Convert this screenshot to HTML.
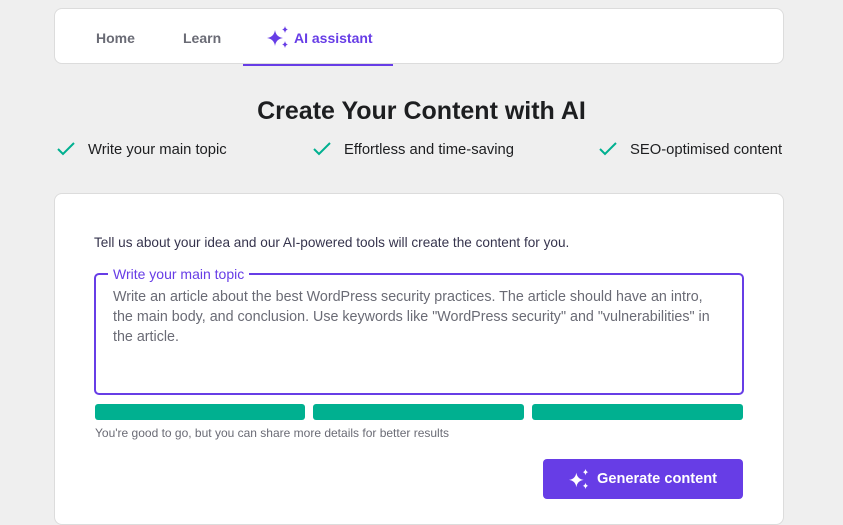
<!DOCTYPE html>
<html><head><style>
body{margin:0;width:843px;height:511px;background:#efefef;font-family:"Liberation Sans",sans-serif;position:relative;overflow:hidden;color:#1d1e20}
.nav{position:absolute;left:54px;top:8px;width:728px;height:54px;background:#fff;border:1px solid #dcdcdc;border-radius:8px}
.nav span{position:absolute;top:21px;font-size:14px;font-weight:bold;color:#6a6b75}
.ul{position:absolute;left:243px;top:64px;width:150px;height:2px;background:#673de6}
h1{position:absolute;left:0;width:843px;top:97px;margin:0;text-align:center;font-size:25px;font-weight:bold}
.feat{position:absolute;top:142px;font-size:14.8px}
.feat svg{position:absolute;left:-32px;top:-1px}
.card{position:absolute;left:54px;top:193px;width:728px;height:330px;background:#fff;border:1px solid #dcdcdc;border-radius:8px}
.lbl{position:absolute;left:108px;top:266px;background:#fff;padding:0 5px;font-size:14px;color:#673de6}
.ta{position:absolute;left:94px;top:273px;width:646px;height:118px;border:2px solid #673de6;border-radius:5px}
.txt{position:absolute;left:113px;top:287px;width:612px;font-size:14.3px;line-height:20px;color:#6a6b75}
.bar{position:absolute;top:404px;height:16px;background:#00b090;border-radius:3px}
.btn{position:absolute;left:543px;top:459px;width:200px;height:40px;background:#673de6;border-radius:4px;color:#fff;font-weight:bold;font-size:14.6px}
</style></head><body>
<div class="nav">
<span style="left:41px">Home</span><span style="left:128px">Learn</span>
<svg style="position:absolute;left:212px;top:16px" width="24" height="24" viewBox="0 0 24 22"><path d="M8 4 Q9 11 16 12 Q9 13 8 20 Q7 13 0 12 Q7 11 8 4Z" fill="#673de6"/><path d="M18 0 Q18.5 3 21 3.5 Q18.5 4 18 7 Q17.5 4 15 3.5 Q17.5 3 18 0Z" fill="#673de6"/><path d="M18 15 Q18.5 18 21 18.5 Q18.5 19 18 22 Q17.5 19 15 18.5 Q17.5 18 18 15Z" fill="#673de6"/></svg>
<span style="left:239px;color:#673de6">AI assistant</span>
</div>
<div class="ul"></div>
<h1>Create Your Content with AI</h1>
<div class="feat" style="left:88px"><svg width="20" height="16"><path d="M2 8 L7 13 L18 2" stroke="#00b090" stroke-width="2" fill="none"/></svg>Write your main topic</div>
<div class="feat" style="left:344px"><svg width="20" height="16"><path d="M2 8 L7 13 L18 2" stroke="#00b090" stroke-width="2" fill="none"/></svg>Effortless and time-saving</div>
<div class="feat" style="left:630px"><svg width="20" height="16"><path d="M2 8 L7 13 L18 2" stroke="#00b090" stroke-width="2" fill="none"/></svg>SEO-optimised content</div>
<div class="card"></div>
<div style="position:absolute;left:94px;top:235px;font-size:13.6px;color:#36344d">Tell us about your idea and our AI-powered tools will create the content for you.</div>
<div class="ta"></div>
<div class="lbl">Write your main topic</div>
<div class="txt">Write an article about the best WordPress security practices. The article should have an intro, the main body, and conclusion. Use keywords like "WordPress security" and "vulnerabilities" in the article.</div>
<div class="bar" style="left:95px;width:210px"></div>
<div class="bar" style="left:313px;width:211px"></div>
<div class="bar" style="left:532px;width:211px"></div>
<div style="position:absolute;left:95px;top:426px;font-size:12px;color:#6a6b75">You're good to go, but you can share more details for better results</div>
<div class="btn">
<svg style="position:absolute;left:26px;top:9px" width="22" height="22" viewBox="0 0 24 22"><path d="M8 4 Q9 11 16 12 Q9 13 8 20 Q7 13 0 12 Q7 11 8 4Z" fill="#fff"/><path d="M18 0 Q18.5 3 21 3.5 Q18.5 4 18 7 Q17.5 4 15 3.5 Q17.5 3 18 0Z" fill="#fff"/><path d="M18 15 Q18.5 18 21 18.5 Q18.5 19 18 22 Q17.5 19 15 18.5 Q17.5 18 18 15Z" fill="#fff"/></svg>
<span style="position:absolute;left:54px;top:12px">Generate content</span></div>
</body></html>
